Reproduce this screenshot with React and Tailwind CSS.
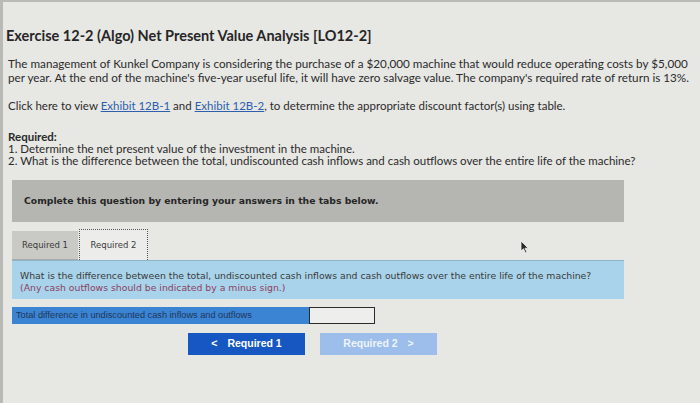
import React from "react";

const body = { fontFamily: "Lato, 'Open Sans', sans-serif" };
const verdana = { fontFamily: "'DejaVu Sans', Verdana, sans-serif" };

function Cursor() {
  return (
    <svg className="absolute left-[517px] top-[238px]" width="9" height="14" viewBox="0 0 9 14">
      <path d="M1 1 L1 11 L3.5 8.8 L5.5 13 L7 12.3 L5 8.2 L8.2 8.2 Z" fill="#2a2a2a" stroke="#f2f2f2" strokeWidth="0.8" />
    </svg>
  );
}

export default function App() {
  return (
    <div className="relative min-h-screen h-[403px] overflow-hidden bg-[#e7e7e4] border-l-[3px] border-t-[2px] border-[#b9b9b5] text-[#2b2b2b]">
      <div className="pl-[3px] pt-[25px]" style={body}>
        <h1 className="text-[14.5px] font-bold leading-[18px] text-[#262626]">
          Exercise 12-2 (Algo) Net Present Value Analysis [LO12-2]
        </h1>

        <p className="mt-[11px] pl-[2px] text-[11.7px] leading-[14px]">
          The management of Kunkel Company is considering the purchase of a $20,000 machine that would reduce operating costs by $5,000
          <br />
          per year. At the end of the machine's five-year useful life, it will have zero salvage value. The company's required rate of return is 13%.
        </p>

        <p className="mt-[15px] pl-[2px] text-[11.5px] leading-[14px]">
          Click here to view{" "}
          <span className="text-[#2d5fae] underline">Exhibit 12B-1</span> and{" "}
          <span className="text-[#2d5fae] underline">Exhibit 12B-2</span>, to determine the appropriate discount factor(s) using table.
        </p>

        <div className="mt-[18px] pl-[2px] text-[11.5px] leading-[12px]">
          <p className="font-bold">Required:</p>
          <p>1. Determine the net present value of the investment in the machine.</p>
          <p>2. What is the difference between the total, undiscounted cash inflows and cash outflows over the entire life of the machine?</p>
        </div>
      </div>

      <div className="ml-[9px] w-[612px]" style={verdana}>
        <div className="mt-[13px] h-[42px] bg-[#b5b5b1] flex items-center pl-[12px]">
          <span className="text-[9.25px] font-bold text-[#262626]">
            Complete this question by entering your answers in the tabs below.
          </span>
        </div>

        <div className="mt-[7px] flex items-end h-[31px]">
          <div className="h-[29px] w-[66px] bg-[#c9c9c5] border-b border-[#a9a9a5] flex items-center justify-center text-[8.5px] text-[#3a3a3a]">
            Required 1
          </div>
          <div className="h-[31px] w-[69px] ml-[1px] bg-[#ececea] border-t border-x border-dotted border-[#555] flex items-center justify-center text-[8.5px] text-[#3a3a3a]">
            Required 2
          </div>
        </div>

        <div className="h-[39px] bg-[#a9d3ea] border-t border-[#8fb3c8] pl-[8px] pt-[9px] text-[9.3px] leading-[12px]">
          <p className="text-[#3a3a3a]">
            What is the difference between the total, undiscounted cash inflows and cash outflows over the entire life of the machine?
          </p>
          <p className="text-[#8b3f63]">(Any cash outflows should be indicated by a minus sign.)</p>
        </div>

        <div className="mt-[8px] flex h-[17px]">
          <div
            className="w-[297px] bg-[#3b84d4] flex items-center pl-[4px] text-[9.2px] text-[#1f3656]"
            style={{ fontFamily: "'Liberation Sans', Arial, sans-serif" }}
          >
            Total difference in undiscounted cash inflows and outflows
          </div>
          <div className="w-[66px] bg-[#eeeeec] border border-[#2b2b2b]"></div>
        </div>

        <div className="mt-[9px] flex gap-[15px] pl-[176px]" style={{ fontFamily: "'Liberation Sans', Arial, sans-serif" }}>
          <div className="h-[22px] w-[117px] bg-[#1657c2] flex items-center justify-center gap-[10px] text-white text-[10.5px] font-bold">
            <span>&lt;</span>
            <span>Required 1</span>
          </div>
          <div className="h-[22px] w-[117px] bg-[#9dbdea] flex items-center justify-center gap-[10px] text-[#eef4fc] text-[10.5px] font-bold">
            <span>Required 2</span>
            <span>&gt;</span>
          </div>
        </div>
      </div>

      <Cursor />
    </div>
  );
}
